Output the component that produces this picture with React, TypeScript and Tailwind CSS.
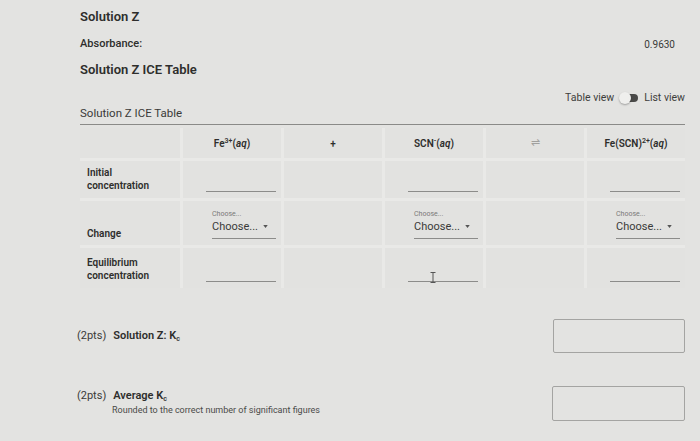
import React from 'react';

const Underline = ({ cursor }: { cursor?: boolean }) => (
  <div className="relative ml-auto mr-[5px] w-[70px] border-b border-[#8c8c8a]">
    {cursor && (
      <svg className="absolute left-[22px] -top-[9px] w-[6px] h-[11px]" viewBox="0 0 6 11" fill="none" stroke="#555" strokeWidth="1">
        <path d="M0.5 0.5h5M3 0.5v10M0.5 10.5h5" />
      </svg>
    )}
  </div>
);

const Select = () => (
  <div className="ml-auto mr-[5px] w-[64px]">
    <div className="text-[7px] leading-[9px] text-[#7a7a78]">Choose...</div>
    <div className="flex items-center justify-between text-[11px] leading-[15px] text-[#3a3a38] pr-[8px]">
      <span>Choose...</span>
      <svg className="w-[5px] h-[3px]" viewBox="0 0 6 4"><path d="M0 0h6L3 4z" fill="#555" /></svg>
    </div>
    <div className="mt-[4px] border-b border-[#8c8c8a]" />
  </div>
);

const Cell = ({ children, className = '' }: { children?: React.ReactNode; className?: string }) => (
  <div className={`bg-[#e2e2e0] ${className}`}>{children}</div>
);

const App: React.FC = () => {
  return (
    <div
      className="w-[700px] h-[441px] overflow-hidden bg-[#e3e3e1] text-[#2e2e2c] pl-[80px] pr-[15px] pt-[9px]"
      style={{ fontFamily: 'Roboto, "Open Sans", sans-serif' }}
    >
      {/* Heading */}
      <div className="text-[13px] leading-[16px] font-semibold">Solution Z</div>

      <div className="mt-[12px] flex items-end justify-between">
        <div className="text-[11px] leading-[14px] font-medium">Absorbance:</div>
        <div className="text-[10px] leading-[13px] mr-[10px] text-[#3a3a38]">0.9630</div>
      </div>

      <div className="mt-[11px] text-[13px] leading-[16px] font-semibold">Solution Z ICE Table</div>

      {/* View toggle */}
      <div className="mt-[13px] flex items-center justify-end gap-[5px] text-[10.5px] leading-[14px] text-[#3e3e3c]">
        <span>Table view</span>
        <div className="relative w-[20px] h-[12px]">
          <div className="absolute left-[5px] top-[2px] w-[14px] h-[8px] rounded-full bg-[#4a4a48]" />
          <div className="absolute left-0 top-0 w-[12px] h-[12px] rounded-full bg-[#efefed] shadow-[0_1px_2px_rgba(0,0,0,0.3)]" />
        </div>
        <span>List view</span>
      </div>

      {/* Caption */}
      <div className="mt-[1px] pb-[3px] border-b border-[#8a8a88] text-[11.5px] leading-[15px] text-[#3a3a38]">
        Solution Z ICE Table
      </div>

      {/* ICE table */}
      <div className="mt-[3px] grid grid-cols-[100px_repeat(5,98px)] grid-rows-[30px_37px_44px_40px] gap-[3px] bg-[#e9e9e7] text-[10px]">
        <Cell />
        <Cell className="flex items-center justify-center font-semibold">
          <span>Fe<sup className="text-[7px]">3+</sup>(<i>aq</i>)</span>
        </Cell>
        <Cell className="flex items-center justify-center font-semibold">+</Cell>
        <Cell className="flex items-center justify-center font-semibold">
          <span>SCN<sup className="text-[7px]">-</sup>(<i>aq</i>)</span>
        </Cell>
        <Cell className="flex items-center justify-center text-[#a0a09e] text-[11px]">⇌</Cell>
        <Cell className="flex items-center justify-center font-semibold">
          <span>Fe(SCN)<sup className="text-[7px]">2+</sup>(<i>aq</i>)</span>
        </Cell>

        <Cell className="px-[7px] pt-[5px] font-semibold leading-[13px]">Initial<br />concentration</Cell>
        <Cell className="flex flex-col justify-end pb-[6px]"><Underline /></Cell>
        <Cell />
        <Cell className="flex flex-col justify-end pb-[6px]"><Underline /></Cell>
        <Cell />
        <Cell className="flex flex-col justify-end pb-[6px]"><Underline /></Cell>

        <Cell className="px-[7px] pb-[5px] flex items-end font-semibold leading-[13px]">Change</Cell>
        <Cell className="pt-[9px]"><Select /></Cell>
        <Cell />
        <Cell className="pt-[9px]"><Select /></Cell>
        <Cell />
        <Cell className="pt-[9px]"><Select /></Cell>

        <Cell className="px-[7px] pt-[8px] font-semibold leading-[13px]">Equilibrium<br />concentration</Cell>
        <Cell className="flex flex-col justify-end pb-[6px]"><Underline /></Cell>
        <Cell />
        <Cell className="flex flex-col justify-end pb-[6px]"><Underline cursor /></Cell>
        <Cell />
        <Cell className="flex flex-col justify-end pb-[6px]"><Underline /></Cell>
      </div>

      {/* Kc */}
      <div className="mt-[31px] flex items-center justify-between h-[34px]">
        <div className="-ml-[3px] text-[11px] leading-[14px]">
          <span className="text-[#3a3a38]">(2pts)</span>
          <span className="ml-[7px] font-semibold">Solution Z: K<sub className="text-[7px]">c</sub></span>
        </div>
        <div className="w-[132px] h-[34px] border border-[#a4a4a2] rounded-[2px]" />
      </div>

      {/* Average Kc */}
      <div className="mt-[33px] flex items-start justify-between">
        <div className="-ml-[3px] pt-[3px]">
          <div className="text-[11px] leading-[14px]">
            <span className="text-[#3a3a38]">(2pts)</span>
            <span className="ml-[7px] font-semibold">Average K<sub className="text-[7px]">c</sub></span>
          </div>
          <div className="ml-[35px] mt-[2px] text-[9px] leading-[11px] text-[#4a4a48]">
            Rounded to the correct number of significant figures
          </div>
        </div>
        <div className="w-[133px] h-[35px] border border-[#a4a4a2] rounded-[2px]" />
      </div>
    </div>
  );
};

export default App;
